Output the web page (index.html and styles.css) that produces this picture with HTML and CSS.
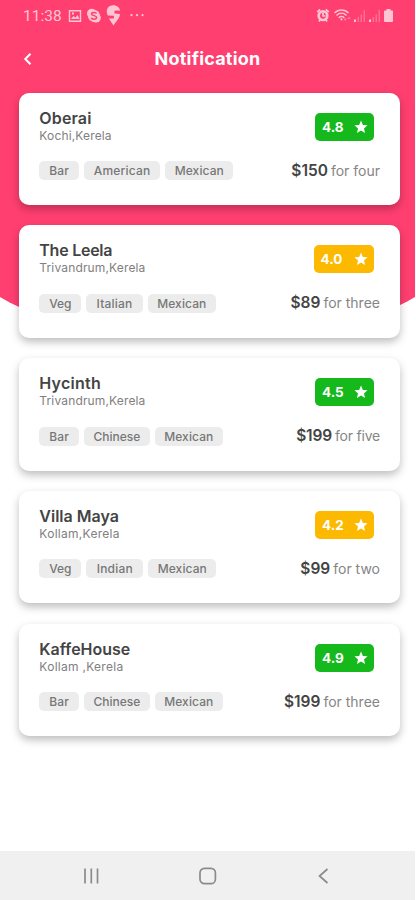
FILE: index.html
```
<!DOCTYPE html>
<html lang="en">
<head>
<meta charset="utf-8">
<title>Notification</title>
<link rel="stylesheet" href="styles.css">
</head>
<body>
<svg class="backdrop" viewBox="0 0 415 340" aria-hidden="true"><path d="M0 0H415V297C365 327 295 336 207.500 336S50 327 0 297Z" fill="#ff3f70"/></svg>
<div class="screen">
  <div class="status">
    <span class="clock">11:38</span>
    <svg class="status-left" viewBox="0 0 80 26" fill="#ffc5d3">
      <path fill-rule="evenodd" d="M.8 10h12.400v12H.8zM2.200 11.400v9.200h9.600v-9.200z"/><path d="M3 19l2.500-3 2 1.500 2-2.500 2 4zM4 12.500h2v2H4z"/>
      <circle cx="23.800" cy="13.600" r="4.800"/><circle cx="28" cy="17.800" r="4.800"/><circle cx="25.900" cy="15.700" r="6"/>
      <path d="M28.600 13.600c-.5-1.500-5-1.800-5 .3 0 2.100 5 1.300 5 3.600 0 2.200-4.900 2.100-5.400.3" fill="none" stroke="#ff3f70" stroke-width="1.500"/>
      <path d="M45.500 25.500C43.800 23 42 20.800 40.900 18.300q1.500.5 5 .1v-2.600l-6.100-.4C37 9 40.500 5.200 45.200 5.200c4 0 6.800 2.700 6.800 5.600q-3-.5-5.500-.1v2.900l5.500.5c-.1 4.400-4 7.400-6.500 11.400z"/>
      <circle cx="63.500" cy="15.200" r="1.100"/><circle cx="69" cy="15.200" r="1.100"/><circle cx="74.500" cy="15.200" r="1.100"/>
    </svg>
    <svg class="status-right" viewBox="0 0 78 26" fill="#ffc5d3">
      <circle cx="7" cy="15.700" r="4.300" fill="none" stroke="#ffc5d3" stroke-width="2.700"/><path d="M7 13v3h2.500M1.200 12l3-2.500M12.800 12l-3-2.500M2.800 21.500l1.500-1.500M11.200 21.500l-1.500-1.500" fill="none" stroke="#ffc5d3" stroke-width="1.700"/>
      <path d="M18.500 13c4-4 10-4 14 0M20.500 15.500c3-3 7-3 10 0M22.700 17.700c1.800-1.600 3.800-1.600 5.600 0" fill="none" stroke="#ffc5d3" stroke-width="1.400"/><circle cx="25.500" cy="19.300" r="1.100"/>
      <path d="M27.500 18.500h3.500l-1.700 2.500zM31.300 19h3.500L33 16.500z" opacity=".5"/>
      <path d="M38 19.500h2V22h-2zM53 19.500h2V22h-2z"/><path d="M41.500 17h1.500v5h-1.500zM44.500 14.500H46V22h-1.500zM47.500 10H49v12h-1.500zM56.500 17H58v5h-1.500zM59.500 14.500H61V22h-1.500zM62.500 10H64v12h-1.500z" opacity=".35"/>
      <path d="M70.500 9h4v1.500H76q1 0 1 1V21q0 1-1 1h-7q-1 0-1-1v-9.500q0-1 1-1h1.500z"/>
    </svg>
  </div>
  <header class="header">
    <svg class="back" viewBox="0 0 10 14"><path d="M7.500 1.700L2.300 7l5.200 5.300" fill="none" stroke="#fff" stroke-width="2"/></svg>
    <h1>Notification</h1>
  </header>
  <main class="list">
    <article class="card">
      <div class="top"><div><h2 class="oberai">Oberai</h2><p class="kochi">Kochi,Kerela</p></div><div class="badge green"><b>4.8</b><svg viewBox="0 0 24 24"><path d="M12 1l3.200 7.400 8 .7-6.100 5.300L19 22.300 12 18.100 5 22.300l1.900-7.900L.8 9.100l8-.7z"/></svg></div></div>
      <div class="bottom"><span class="chip bar">Bar</span><span class="chip american">American</span><span class="chip mexican">Mexican</span><span class="price"><b>$150</b><span>for four</span></span></div>
    </article>
    <article class="card">
      <div class="top"><div><h2 class="leela">The Leela</h2><p class="trivandrum">Trivandrum,Kerela</p></div><div class="badge amber wide"><b>4.0</b><svg viewBox="0 0 24 24"><path d="M12 1l3.200 7.400 8 .7-6.100 5.300L19 22.300 12 18.100 5 22.300l1.900-7.900L.8 9.100l8-.7z"/></svg></div></div>
      <div class="bottom"><span class="chip veg">Veg</span><span class="chip italian">Italian</span><span class="chip mexican">Mexican</span><span class="price"><b>$89</b><span>for three</span></span></div>
    </article>
    <article class="card">
      <div class="top"><div><h2 class="hycinth">Hycinth</h2><p class="trivandrum">Trivandrum,Kerela</p></div><div class="badge green"><b>4.5</b><svg viewBox="0 0 24 24"><path d="M12 1l3.200 7.400 8 .7-6.100 5.300L19 22.300 12 18.100 5 22.300l1.900-7.900L.8 9.100l8-.7z"/></svg></div></div>
      <div class="bottom"><span class="chip bar">Bar</span><span class="chip chinese">Chinese</span><span class="chip mexican">Mexican</span><span class="price tight"><b>$199</b><span>for five</span></span></div>
    </article>
    <article class="card">
      <div class="top"><div><h2 class="villa">Villa Maya</h2><p class="kollam">Kollam,Kerela</p></div><div class="badge amber"><b>4.2</b><svg viewBox="0 0 24 24"><path d="M12 1l3.200 7.400 8 .7-6.100 5.300L19 22.300 12 18.100 5 22.300l1.900-7.900L.8 9.100l8-.7z"/></svg></div></div>
      <div class="bottom"><span class="chip veg">Veg</span><span class="chip indian">Indian</span><span class="chip mexican">Mexican</span><span class="price"><b>$99</b><span>for two</span></span></div>
    </article>
    <article class="card">
      <div class="top"><div><h2 class="kaffe">KaffeHouse</h2><p class="kollam">Kollam ,Kerela</p></div><div class="badge green"><b>4.9</b><svg viewBox="0 0 24 24"><path d="M12 1l3.200 7.400 8 .7-6.100 5.300L19 22.300 12 18.100 5 22.300l1.900-7.900L.8 9.100l8-.7z"/></svg></div></div>
      <div class="bottom"><span class="chip bar">Bar</span><span class="chip chinese">Chinese</span><span class="chip mexican">Mexican</span><span class="price"><b>$199</b><span>for three</span></span></div>
    </article>
  </main>
  <nav class="nav">
    <svg viewBox="0 0 20 20"><path d="M3 2.500v15M9.300 2.500v15M15.500 2.500v15"/></svg>
    <svg viewBox="0 0 20 20"><rect x="2" y="2.300" width="15.400" height="15.400" rx="4.500"/></svg>
    <svg viewBox="0 0 20 20"><path d="M13.500 3L5.500 10l8 7"/></svg>
  </nav>
</div>
</body>
</html>
```
FILE: styles.css
```
* { box-sizing: border-box; }
body { margin: 0; width: 416px; height: 900px; background: #fff; font-family: Inter, sans-serif; overflow: hidden; }
h1, h2, p { margin: 0; }
.backdrop { position: absolute; top: 0; left: 0; width: 415px; height: 340px; z-index: -1; }
.screen { width: 415px; height: 900px; display: flex; flex-direction: column; }
.status { height: 32px; flex: none; display: flex; padding: 0 21px 0 23px; color: #ffc5d3; }
.clock { width: 45px; font: 15.500px/32px Roboto, sans-serif; white-space: nowrap; }
.status-left { width: 80px; height: 26px; }
.status-right { width: 78px; height: 26px; margin-left: auto; }
.header { height: 60.500px; flex: none; display: grid; grid-template-columns: 60px 1fr 60px; color: #fff; }
.back { width: 10px; height: 14px; margin: 20px 0 0 23px; }
h1 { font-size: 18px; line-height: 54px; font-weight: 700; letter-spacing: .2px; text-align: center; white-space: nowrap; }
.list { flex: 1; display: flex; flex-direction: column; gap: 20.300px; padding: 0 15px 0 19.300px; }
.card { height: 112.500px; flex: none; border-radius: 10px; background: #fff; padding: 15px 20px 0; box-shadow: 0 4px 8px rgba(0,0,0,.26); }
.top { height: 53px; display: flex; justify-content: space-between; }
h2 { font-size: 16px; line-height: 20px; font-weight: 600; color: #444; white-space: nowrap; }
.oberai { letter-spacing: .15px; }
.leela { letter-spacing: -.25px; }
.hycinth { letter-spacing: .25px; }
p { font-size: 12px; line-height: 15px; color: #808080; white-space: nowrap; }
.kochi { letter-spacing: .15px; }
.trivandrum { letter-spacing: .15px; }
.kollam { letter-spacing: .28px; }
.badge { width: 59px; height: 28px; margin: 5px 6px 0 0; padding: 0 6px 0 7px; border-radius: 5px; display: flex; align-items: center; justify-content: space-between; color: #fff; font-size: 13.500px; }
.badge svg { width: 14px; height: 14px; fill: #fff; }
.badge.wide { width: 60.500px; }
.green { background: #15b91c; }
.amber { background: #fdb900; }
.bottom { height: 20px; display: flex; align-items: center; gap: 5px; }
.chip { height: 19px; border-radius: 5px; background: #ececec; color: #777; font-size: 12px; line-height: 19px; font-weight: 500; text-align: center; flex: none; }
.bar { width: 39.500px; letter-spacing: .15px; }
.veg { width: 42px; }
.american { width: 76.500px; letter-spacing: .2px; }
.mexican { width: 68px; letter-spacing: .1px; }
.italian { width: 56.500px; letter-spacing: .2px; }
.indian { width: 57px; letter-spacing: .2px; }
.chinese { width: 66px; }
.price { margin-left: auto; display: flex; gap: 3px; align-items: baseline; font-size: 14px; line-height: 20px; color: #858585; white-space: nowrap; }
.price b { font-size: 15.500px; font-weight: 600; color: #444; }
.price.tight { letter-spacing: -.2px; }
.nav { height: 49px; flex: none; background: #f0f0f0; display: flex; align-items: center; justify-content: center; gap: 96px; }
.nav svg { width: 20px; height: 20px; fill: none; stroke: #8b8b8b; stroke-width: 1.700; }
```
